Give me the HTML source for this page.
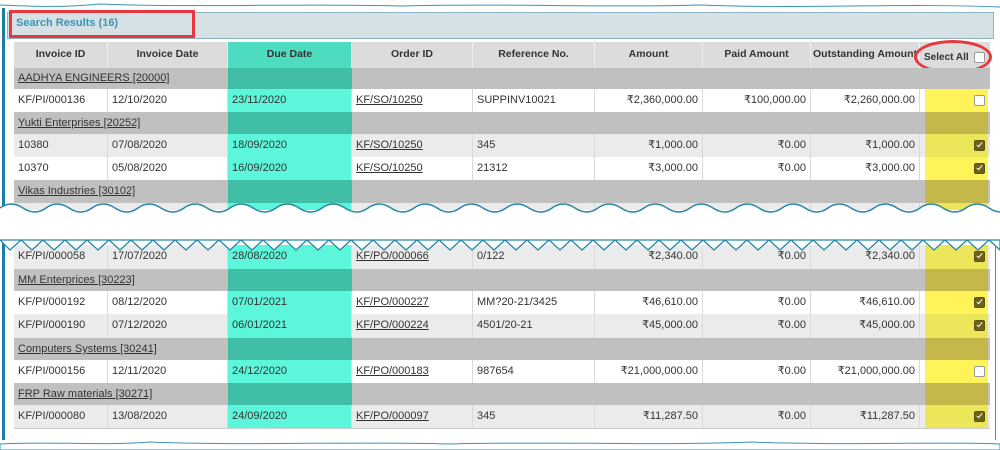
<!DOCTYPE html>
<html><head><style>
body{margin:0;width:1000px;height:450px;background:#fff;position:relative;overflow:hidden;font-family:"Liberation Sans",sans-serif;font-size:11px;color:#333}
.clip{position:absolute;left:0;width:1000px;overflow:hidden}
.row{position:absolute;left:14px;display:flex;height:23px;line-height:23px}
.row>div{box-sizing:border-box;padding-left:4px;white-space:nowrap;overflow:hidden;border-right:1px solid #dadada}
.c1{width:94px}.c2{width:120px}.c3{width:124px}.c4{width:121px}.c5{width:122px}.c6{width:108px;text-align:right;padding-right:4px}.c7{width:108px;text-align:right;padding-right:4px}.c8{width:109px;text-align:right;padding-right:4px}.c9{width:70px;padding:0!important;border:none!important;position:relative}
.c9 i{position:absolute;left:5px;right:2px;top:0;bottom:0;background:#fff35a}
.w{background:#fff}.g{background:#ebebeb}
.w .c3,.g .c3{background:#5cf6da}
.grp{background:#c0c0c0}.grp>div{border:none}.grp .c3{background:#40bfa6}.grp .c9 i{background:#c4b84a}
.g .c9 i{background:#ece65a}
.grp .name{position:absolute;left:4px;top:0;text-decoration:underline;background:none}
u{text-decoration:underline}
.cb{position:absolute;right:5px;top:6px;width:9px;height:9px;border:1px solid #999;border-radius:2px;background:#fff}
.cb.on{background:#6b6218;border-color:#5a5210}
.cb.on:after{content:"";position:absolute;left:3px;top:0px;width:2px;height:5px;border:solid #fff;border-width:0 1.5px 1.5px 0;transform:rotate(40deg)}
.hdr{background:#dcdcdc;height:26px;line-height:24px;font-weight:bold;text-align:center;font-size:10.5px}
.hdr>div{text-align:center!important;padding:0!important;border-right:1px solid #eee;overflow:visible!important}
.hdr .c3{background:#4ddcc0}
</style></head><body>
<div class="clip" style="top:0;height:210px">
 <div style="position:absolute;left:2px;top:8px;width:3px;height:200px;background:#1b7ea8"></div>
 <div style="position:absolute;left:7px;top:12px;width:985px;height:25px;background:#d6e1e6;border:1px solid #8fb4c6"></div>
 <div style="position:absolute;left:9px;top:10px;width:180px;height:22px;border:3px solid #e8383d"></div>
 <div style="position:absolute;left:16px;top:17px;font-weight:bold;color:#3b94b4;font-size:11px">Search Results (16)</div>
 <div class="row hdr" style="top:42px"><div class="c1">Invoice ID</div><div class="c2">Invoice Date</div><div class="c3">Due Date</div><div class="c4">Order ID</div><div class="c5">Reference No.</div><div class="c6">Amount</div><div class="c7">Paid Amount</div><div class="c8">Outstanding Amount</div><div class="c9" style="background:#dcdcdc"><span style="position:absolute;left:4px;top:4px;font-size:10px">Select All</span><span class="cb" style="top:10px;right:5px"></span></div></div>
 <div style="position:absolute;left:914px;top:40px;width:72px;height:28px;border:3px solid #e8383d;border-radius:50%"></div>
 <div class="row grp" style="top:68px;height:21px;line-height:21px"><div class="c1"><span class="name">AADHYA ENGINEERS [20000]</span></div><div class="c2"></div><div class="c3"></div><div class="c4"></div><div class="c5"></div><div class="c6"></div><div class="c7"></div><div class="c8"></div><div class="c9" style="background:#c0c0c0"></div></div>
 <div class="row w" style="top:89px"><div class="c1">KF/PI/000136</div><div class="c2">12/10/2020</div><div class="c3">23/11/2020</div><div class="c4"><u>KF/SO/10250</u></div><div class="c5">SUPPINV10021</div><div class="c6">₹2,360,000.00</div><div class="c7">₹100,000.00</div><div class="c8">₹2,260,000.00</div><div class="c9"><i></i><span class="cb"></span></div></div>
 <div class="row grp" style="top:112px;height:22px;line-height:22px"><div class="c1"><span class="name">Yukti Enterprises [20252]</span></div><div class="c2"></div><div class="c3"></div><div class="c4"></div><div class="c5"></div><div class="c6"></div><div class="c7"></div><div class="c8"></div><div class="c9"><i></i></div></div>
 <div class="row g" style="top:134px"><div class="c1">10380</div><div class="c2">07/08/2020</div><div class="c3">18/09/2020</div><div class="c4"><u>KF/SO/10250</u></div><div class="c5">345</div><div class="c6">₹1,000.00</div><div class="c7">₹0.00</div><div class="c8">₹1,000.00</div><div class="c9"><i></i><span class="cb on"></span></div></div>
 <div class="row w" style="top:157px"><div class="c1">10370</div><div class="c2">05/08/2020</div><div class="c3">16/09/2020</div><div class="c4"><u>KF/SO/10250</u></div><div class="c5">21312</div><div class="c6">₹3,000.00</div><div class="c7">₹0.00</div><div class="c8">₹3,000.00</div><div class="c9"><i></i><span class="cb on"></span></div></div>
 <div class="row grp" style="top:180px"><div class="c1"><span class="name">Vikas Industries [30102]</span></div><div class="c2"></div><div class="c3"></div><div class="c4"></div><div class="c5"></div><div class="c6"></div><div class="c7"></div><div class="c8"></div><div class="c9"><i></i></div></div>
 <div class="row g" style="top:203px"><div class="c1"></div><div class="c2"></div><div class="c3"></div><div class="c4"></div><div class="c5"></div><div class="c6"></div><div class="c7"></div><div class="c8"></div><div class="c9"><i></i></div></div>
</div>
<svg style="position:absolute;left:0;top:0" width="1000" height="450">
 <path d="M0,0 H1000 V7 C900,3 800,9 700,5 C600,8 500,3 400,6 C300,3 200,8 100,4 C60,8 30,6 0,5Z" fill="#fff"/>
 <path d="M0,5 C30,6 60,8 100,4 C200,8 300,3 400,6 C500,3 600,8 700,5 C800,9 900,3 1000,7" fill="none" stroke="#3b94b4" stroke-width="1"/>
 <path d="M0,208 q11,-8 23,0 t23,0 t23,0 t23,0 t23,0 t23,0 t23,0 t23,0 t23,0 t23,0 t23,0 t23,0 t23,0 t23,0 t23,0 t23,0 t23,0 t23,0 t23,0 t23,0 t23,0 t23,0 t23,0 t23,0 t23,0 t23,0 t23,0 t23,0 t23,0 t23,0 t23,0 t23,0 t23,0 t23,0 t23,0 t23,0 t23,0 t23,0 t23,0 t23,0 t23,0 t23,0 t23,0 t23,0 V245 H0Z" fill="#fff"/>
 <path d="M0,208 q11,-8 23,0 t23,0 t23,0 t23,0 t23,0 t23,0 t23,0 t23,0 t23,0 t23,0 t23,0 t23,0 t23,0 t23,0 t23,0 t23,0 t23,0 t23,0 t23,0 t23,0 t23,0 t23,0 t23,0 t23,0 t23,0 t23,0 t23,0 t23,0 t23,0 t23,0 t23,0 t23,0 t23,0 t23,0 t23,0 t23,0 t23,0 t23,0 t23,0 t23,0 t23,0 t23,0 t23,0 t23,0" fill="none" stroke="#2a86a8" stroke-width="1.5"/>
</svg>
<div class="clip" style="top:240px;height:210px">
 <div style="position:absolute;left:2px;top:0;width:3px;height:200px;background:#1b7ea8"></div>
 <div class="row g" style="top:5px;height:24px"><div class="c1">KF/PI/000058</div><div class="c2">17/07/2020</div><div class="c3">28/08/2020</div><div class="c4"><u>KF/PO/000066</u></div><div class="c5">0/122</div><div class="c6">₹2,340.00</div><div class="c7">₹0.00</div><div class="c8">₹2,340.00</div><div class="c9"><i></i><span class="cb on"></span></div></div>
 <div class="row grp" style="top:29px;height:22px;line-height:22px"><div class="c1"><span class="name">MM Enterprices [30223]</span></div><div class="c2"></div><div class="c3"></div><div class="c4"></div><div class="c5"></div><div class="c6"></div><div class="c7"></div><div class="c8"></div><div class="c9"><i></i></div></div>
 <div class="row w" style="top:51px"><div class="c1">KF/PI/000192</div><div class="c2">08/12/2020</div><div class="c3">07/01/2021</div><div class="c4"><u>KF/PO/000227</u></div><div class="c5">MM?20-21/3425</div><div class="c6">₹46,610.00</div><div class="c7">₹0.00</div><div class="c8">₹46,610.00</div><div class="c9"><i></i><span class="cb on"></span></div></div>
 <div class="row g" style="top:74px;height:24px"><div class="c1">KF/PI/000190</div><div class="c2">07/12/2020</div><div class="c3">06/01/2021</div><div class="c4"><u>KF/PO/000224</u></div><div class="c5">4501/20-21</div><div class="c6">₹45,000.00</div><div class="c7">₹0.00</div><div class="c8">₹45,000.00</div><div class="c9"><i></i><span class="cb on"></span></div></div>
 <div class="row grp" style="top:98px;height:22px;line-height:22px"><div class="c1"><span class="name">Computers Systems [30241]</span></div><div class="c2"></div><div class="c3"></div><div class="c4"></div><div class="c5"></div><div class="c6"></div><div class="c7"></div><div class="c8"></div><div class="c9"><i></i></div></div>
 <div class="row w" style="top:120px"><div class="c1">KF/PI/000156</div><div class="c2">12/11/2020</div><div class="c3">24/12/2020</div><div class="c4"><u>KF/PO/000183</u></div><div class="c5">987654</div><div class="c6">₹21,000,000.00</div><div class="c7">₹0.00</div><div class="c8">₹21,000,000.00</div><div class="c9"><i></i><span class="cb"></span></div></div>
 <div class="row grp" style="top:143px;height:22px;line-height:22px"><div class="c1"><span class="name">FRP Raw materials [30271]</span></div><div class="c2"></div><div class="c3"></div><div class="c4"></div><div class="c5"></div><div class="c6"></div><div class="c7"></div><div class="c8"></div><div class="c9"><i></i></div></div>
 <div class="row g" style="top:165px"><div class="c1">KF/PI/000080</div><div class="c2">13/08/2020</div><div class="c3">24/09/2020</div><div class="c4"><u>KF/PO/000097</u></div><div class="c5">345</div><div class="c6">₹11,287.50</div><div class="c7">₹0.00</div><div class="c8">₹11,287.50</div><div class="c9"><i></i><span class="cb on"></span></div></div>
 <div style="position:absolute;left:14px;top:188px;width:976px;height:1px;background:#ccc"></div>
 <div style="position:absolute;left:995px;top:0;width:1px;height:200px;background:#3b94b4"></div>
</div>
<svg style="position:absolute;left:0;top:0" width="1000" height="450">
 <path d="M0,240 H1000 V250 L989,240 978,250 967,240 956,250 945,240 934,250 923,240 912,250 901,240 890,250 879,240 868,250 857,240 846,250 835,240 824,250 813,240 802,250 791,240 780,250 769,240 758,250 747,240 736,250 725,240 714,250 703,240 692,250 681,240 670,250 659,240 648,250 637,240 626,250 615,240 604,250 593,240 582,250 571,240 560,250 549,240 538,250 527,240 516,250 505,240 494,250 483,240 472,250 461,240 450,250 439,240 428,250 417,240 406,250 395,240 384,250 373,240 362,250 351,240 340,250 329,240 318,250 307,240 296,250 285,240 274,250 263,240 252,250 241,240 230,250 219,240 208,250 197,240 186,250 175,240 164,250 153,240 142,250 131,240 120,250 109,240 98,250 87,240 76,250 65,240 54,250 43,240 32,250 21,240 10,250 0,240Z" fill="#fff" stroke="#2a86a8" stroke-width="1.3"/>
 <path d="M0,450 V444 C50,441 100,446 150,442 C250,446 350,441 450,444 C550,441 650,446 750,442 C850,446 950,441 1000,444 V450Z" fill="#fff" stroke="#3b94b4" stroke-width="1"/>
</svg>
</body></html>
